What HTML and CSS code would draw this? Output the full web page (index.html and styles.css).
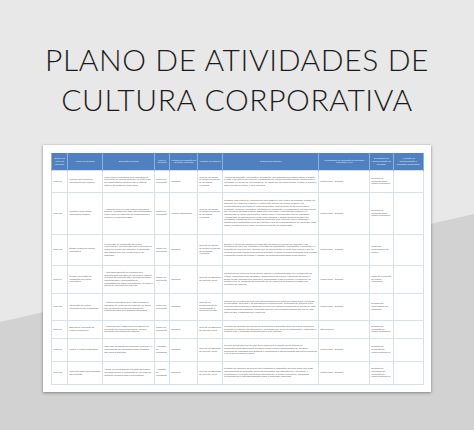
FILE: index.html
```html
<!DOCTYPE html>
<html lang="pt">
<head>
<meta charset="utf-8">
<title>Plano de atividades de cultura corporativa</title>
<link rel="stylesheet" href="styles.css">
</head>
<body>
<div class="backdrop"></div>
<main class="page">
  <h1 class="title">PLANO DE ATIVIDADES DE<br>CULTURA CORPORATIVA</h1>
  <section class="sheet">
    <table class="grid">
      <colgroup>
        <col class="c1"><col class="c2"><col class="c3"><col class="c4"><col class="c5">
        <col class="c6"><col class="c7"><col class="c8"><col class="c9"><col class="c10">
      </colgroup>
      <thead>
        <tr class="rh">
          <th>Número de série da atividade</th>
          <th>Nome da atividade</th>
          <th>Descrição da tarefa</th>
          <th>Tipo de atividade</th>
          <th>Método de avaliação da atividade concluída</th>
          <th>Unidade de trabalho</th>
          <th>Detalhes do trabalho</th>
          <th>Cronograma de conclusão da atividade planejada e real</th>
          <th>Resultados da implementação da atividade</th>
          <th>Avaliação da implementação e qualidade da atividade</th>
        </tr>
      </thead>
      <tbody>
        <tr class="r1">
          <td>CULT-01</td>
          <td>Cultivar uma cultura de reconhecimento proativo</td>
          <td>Uma cultura empresarial forte impulsiona a percepção de valores comuns e a união entre os colaboradores, fortalecendo a visão de futuro e as metas de longo prazo.</td>
          <td>Cultivo de percepção</td>
          <td>qualificar</td>
          <td>Gerente do Centro de Desenvolvimento de Recursos Humanos</td>
          <td>Através da formação, orientação e divulgação, os colaboradores compreendem a missão, a visão e os valores da empresa, construindo um reconhecimento comum, fortalecendo a identidade e o senso de pertencimento, de forma que os valores sejam vividos no trabalho diário por toda a equipe e pela liderança.</td>
          <td>Longo prazo - Durante</td>
          <td>Relatório de avaliação sobre cultura corporativa</td>
          <td></td>
        </tr>
        <tr class="r2">
          <td>CULT-02</td>
          <td>Construir uma cultura empresarial positiva</td>
          <td>A empresa deve ter uma cultura corporativa positiva, formada com base nas necessidades reais, capaz de estimular os colaboradores e promover a competitividade.</td>
          <td>Cultivo de percepção</td>
          <td>Manual padronizado</td>
          <td>Gerente do Centro de Desenvolvimento de Recursos Humanos</td>
          <td>Construir uma cultura de empresa que seja positiva e que motive as pessoas, criando um ambiente de confiança, respeito e cooperação. Definir os valores centrais e os comportamentos esperados de cada colaborador, comunicando-os de forma clara e constante. Promover encontros, atividades de integração e programas de reconhecimento que valorizem as boas práticas. Estimular a inovação, o aprendizado contínuo e a participação de todos nas decisões, fortalecendo o compromisso com os resultados. Acompanhar os indicadores de clima organizacional e ajustar as ações sempre que necessário, garantindo que a cultura se mantenha viva, coerente com a estratégia e alinhada às necessidades reais da empresa e dos seus colaboradores, de modo que cada equipe reconheça o seu papel no desenvolvimento da organização.</td>
          <td>Longo prazo - Durante</td>
          <td>Relatório de avaliação sobre cultura corporativa</td>
          <td></td>
        </tr>
        <tr class="r3">
          <td>CULT-03</td>
          <td>Ênfase prática da cultura corporativa</td>
          <td>O processo de construção da cultura empresarial é um processo com a liderança de desenvolvimento da empresa e a integração dos hábitos com que a cultura deve ser praticada.</td>
          <td>Cultivo de percepção</td>
          <td>qualificar</td>
          <td>Gerente do Centro de Desenvolvimento de Recursos Humanos</td>
          <td>Embutir a cultura corporativa em cada fase do desenvolvimento da empresa e nas atividades do dia a dia, incluindo o processo de contratação, a integração, a formação e a avaliação de desempenho. Garantir que os líderes sejam exemplo dos valores e que as políticas internas reflitam os princípios definidos. Realizar reuniões periódicas para verificar a aplicação prática da cultura e registrar as melhorias alcançadas pelas equipes.</td>
          <td>Longo prazo - Durante</td>
          <td>Prática de conformidade da cultura</td>
          <td></td>
        </tr>
        <tr class="r4">
          <td>CULT-04</td>
          <td>O papel da gestão na construção da cultura corporativa</td>
          <td>A alta administração da empresa deve desempenhar um papel de liderança e modelo, a cultura da empresa não é apenas divulgada, mas praticada e demonstrada no comportamento diário dos gestores e de toda a equipe de liderança da empresa.</td>
          <td>Cultivo de percepção</td>
          <td>qualificar</td>
          <td>Gerente do Escritório do Gerente Geral</td>
          <td>Os gestores de todos os níveis devem assumir a responsabilidade pela construção da cultura, participando das atividades, comunicando os valores e apoiando as equipes. Definir metas culturais para cada área, acompanhar a sua execução e reconhecer os gestores que se destacam na promoção de um ambiente de trabalho alinhado aos princípios da empresa.</td>
          <td>Longo prazo - Durante</td>
          <td>Plano de execução da cultura corporativa</td>
          <td></td>
        </tr>
        <tr class="r5">
          <td>CULT-05</td>
          <td>Integração da cultura corporativa com a estratégia</td>
          <td>A cultura empresarial deve estar alinhada à estratégia de negócios da empresa, de forma que os valores orientem as decisões e contribuam para os resultados planejados.</td>
          <td>Cultivo de percepção</td>
          <td>qualificar</td>
          <td>Gerente do Departamento de Comunicação e Desenvolvimento</td>
          <td>Garantir que a cultura da empresa esteja integrada aos objetivos estratégicos, revisando os processos, as metas e os indicadores de desempenho. Comunicar de maneira clara como os valores apoiam a estratégia, envolver as equipes na definição de planos de ação e acompanhar os resultados, corrigindo desvios e incentivando práticas que gerem valor para clientes, colaboradores e parceiros.</td>
          <td>Longo prazo - Durante</td>
          <td>Relatório de cumprimento da estratégia</td>
          <td></td>
        </tr>
        <tr class="r6">
          <td>CULT-06</td>
          <td>Sistema de avaliação da cultura corporativa</td>
          <td>A empresa deve estabelecer um sistema de avaliação da cultura corporativa e da sua aplicação nas equipes de trabalho.</td>
          <td>Cultivo de percepção</td>
          <td>qualificar</td>
          <td>Gerente do Escritório do Gerente Geral</td>
          <td>O diretor do escritório do gerente geral organiza a avaliação anual da cultura corporativa, definindo os critérios, os indicadores e os métodos de coleta de informações, elaborando o relatório final e propondo melhorias para o ciclo seguinte.</td>
          <td>Não aplicável</td>
          <td>Relatório de avaliação da cultura corporativa</td>
          <td></td>
        </tr>
        <tr class="r7">
          <td>CULT-07</td>
          <td>Cultivo e cultura corporativa</td>
          <td>Todo ano, avaliação da cultura da empresa e o cumprimento de comportamentos alinhados aos valores definidos.</td>
          <td>Avaliação de resultados</td>
          <td>qualificar</td>
          <td>Gerente do Escritório do Gerente Geral</td>
          <td>Gerente do escritório do gerente geral organiza a avaliação anual, analisa os comportamentos observados, identifica pontos fortes e oportunidades de melhoria, apresenta os resultados aos gestores e acompanha a implementação das ações corretivas e de desenvolvimento cultural.</td>
          <td>Longo prazo - Durante</td>
          <td>Relatório de avaliação da cultura corporativa</td>
          <td></td>
        </tr>
        <tr class="r8">
          <td>CULT-08</td>
          <td>Plano derivado dos resultados da avaliação</td>
          <td>Aplicar os resultados da avaliação da cultura corporativa para a elaboração de um plano de ações de melhoria para o ano seguinte.</td>
          <td>Avaliação de resultados</td>
          <td>qualificar</td>
          <td>Gerente do Escritório do Gerente Geral</td>
          <td>O diretor do escritório do gerente geral organiza a elaboração do plano anual com base nos resultados da avaliação, define as prioridades, os responsáveis e os prazos, e acompanha a execução das ações para fortalecer a cultura corporativa, informando periodicamente a alta administração sobre o progresso alcançado.</td>
          <td>Longo prazo - Durante</td>
          <td>Relatório de resultados da avaliação da cultura corporativa</td>
          <td></td>
        </tr>
      </tbody>
    </table>
  </section>
</main>
</body>
</html>
```

FILE: styles.css
```css
* { box-sizing: border-box; }

html, body {
  margin: 0;
  padding: 0;
}

body {
  width: 474px;
  height: 430px;
  overflow: hidden;
  background: #e8e8e8;
  position: relative;
  font-family: "Liberation Sans", Arial, sans-serif;
}

.backdrop {
  position: absolute;
  inset: 0;
  background: #d2d2d2;
  clip-path: polygon(0 322px, 474px 214px, 474px 430px, 0 430px);
}

.page {
  position: relative;
  display: flex;
  flex-direction: column;
  align-items: center;
}

.title {
  margin: 39px 0 0;
  font-family: "Lato", "Liberation Sans", sans-serif;
  font-weight: 300;
  font-size: 30px;
  line-height: 40px;
  letter-spacing: 0.6px;
  color: #1a1a1a;
  text-align: center;
}

.sheet {
  margin-top: 26px;
  width: 388px;
  height: 247px;
  background: #fff;
  padding: 8px;
  box-shadow: 0 1px 3px rgba(0, 0, 0, 0.35), 0 0 1px rgba(0, 0, 0, 0.2);
}

.grid {
  width: 372px;
  table-layout: fixed;
  border-collapse: collapse;
  font-size: 2.3px;
  line-height: 2.7px;
  color: #555;
}

.c1 { width: 16.3px; }
.c2 { width: 35px; }
.c3 { width: 51.7px; }
.c4 { width: 15.3px; }
.c5 { width: 28px; }
.c6 { width: 24.7px; }
.c7 { width: 96.3px; }
.c8 { width: 51px; }
.c9 { width: 23.4px; }
.c10 { width: 30.3px; }

.grid th {
  background: #4f80c0;
  color: #eef3fa;
  font-weight: 400;
  text-align: center;
  vertical-align: middle;
  padding: 0 1px;
  border-left: 0.6px solid #8fb0da;
  border-right: 0.6px solid #8fb0da;
  overflow: hidden;
}

.grid td {
  border: 0.6px solid #d7e1ea;
  vertical-align: middle;
  text-align: left;
  padding: 0 1px;
  overflow: hidden;
}

.rh { height: 17px; }
.r1 { height: 22px; }
.r2 { height: 42px; }
.r3 { height: 31px; }
.r4 { height: 28px; }
.r5 { height: 27px; }
.r6 { height: 18px; }
.r7 { height: 23px; }
.r8 { height: 23px; }
```
